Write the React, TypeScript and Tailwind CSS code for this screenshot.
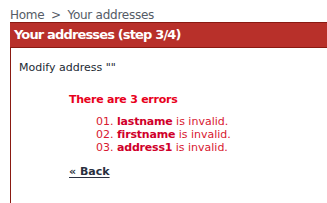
export default function App() {
  const errs = ["lastname", "firstname", "address1"];
  return (
    <div className="w-[327px] h-[203px] bg-white overflow-hidden pl-[10px] pt-[9px]" style={{ fontFamily: '"DejaVu Sans", Verdana, sans-serif' }}>
      <div className="text-[12px] leading-[13px] text-[#555b66] h-[13px] tracking-[-0.25px]">
        Home <span className="mx-[3px]">&gt;</span> Your addresses
      </div>
      <div className="h-[26px] bg-[#b8302a] border-y border-[#8a1a12] pl-[4px] flex items-center text-white font-bold text-[13px] tracking-[-0.85px]">
        Your addresses (step 3/4)
      </div>
      <div className="border-l border-[#8a1a12] h-[160px] pl-[8px] pt-[13px]">
        <p className="text-[11px] leading-[14px] text-[#222a33]">Modify address ""</p>
        <div className="pl-[50px] pt-[18px]">
          <p className="text-[11px] font-bold text-[#e8001c] leading-[14px] tracking-[-0.25px]">There are 3 errors</p>
          <ol className="pl-[27px] pt-[8px] text-[11px] leading-[13px] text-[#d81830]">
            {errs.map((e, i) => (
              <li key={e}>
                0{i + 1}. <b className="text-[#d0002a] tracking-[-0.2px]">{e}</b> is invalid.
              </li>
            ))}
          </ol>
          <a href="#" className="inline-block mt-[10px] text-[11px] font-bold text-[#2a3040] underline underline-offset-2">
            « Back
          </a>
        </div>
      </div>
    </div>
  );
}
